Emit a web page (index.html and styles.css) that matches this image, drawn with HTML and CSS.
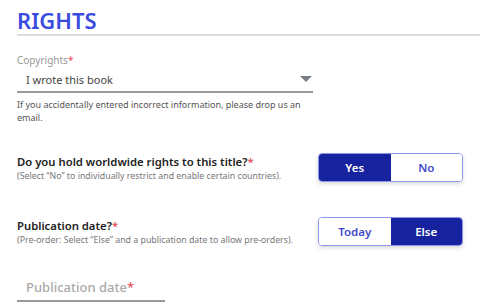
FILE: index.html
```html
<!DOCTYPE html>
<html>
<head>
  <title>Rights</title>
  <link rel="stylesheet" href="styles.css">
</head>
<body>

  <h1 class="title">RIGHTS</h1>

  <form class="form">

    <section class="field">
      <label class="field-label">Copyrights<span class="req">*</span></label>
      <div class="select">
        <span class="select-value">I wrote this book</span>
        <span class="caret"></span>
      </div>
      <p class="hint">If you accidentally entered incorrect information, please drop us an email.</p>
    </section>

    <section class="question">
      <div class="question-text">
        <h2>Do you hold worldwide rights to this title?<span class="req">*</span></h2>
        <p>(Select “No” to individually restrict and enable certain countries).</p>
      </div>
      <div class="toggle">
        <button type="button" class="on">Yes</button>
        <button type="button">No</button>
      </div>
    </section>

    <section class="question">
      <div class="question-text">
        <h2>Publication date?<span class="req">*</span></h2>
        <p>(Pre-order: Select “Else” and a publication date to allow pre-orders).</p>
      </div>
      <div class="toggle">
        <button type="button">Today</button>
        <button type="button" class="on">Else</button>
      </div>
    </section>

    <section class="date">
      <span class="placeholder">Publication date<span class="req">*</span></span>
    </section>

  </form>

</body>
</html>
```

FILE: styles.css
```css
body{
    margin: 0;
    padding: 0 0 0 17px;
    font-family: "Noto Sans", "Open Sans", sans-serif;
    background: #fff;
}

.title{
    margin: 0;
    padding-top: 7px;
    height: 27px;
    font-size: 22px;
    line-height: 27px;
    font-weight: 600;
    color: #3a4be0;
    border-bottom: 2px solid #dcdcdc;
}

.form{
    width: 446px;
    padding-top: 18px;
}

.req{
    color: #e8505b;
}

.field-label{
    display: block;
    font-size: 10px;
    line-height: 13px;
    color: #999;
}

.select{
    width: 296px;
    height: 24px;
    display: flex;
    align-items: center;
    justify-content: space-between;
    border-bottom: 2px solid #9a9a9a;
}

.select-value{
    padding-left: 9px;
    font-size: 11px;
    color: #444;
}

.caret{
    width: 0;
    height: 0;
    margin-right: 1px;
    border-left: 6px solid transparent;
    border-right: 6px solid transparent;
    border-top: 6px solid #7a7f86;
}

.hint{
    margin: 5px 0 0;
    font-size: 9px;
    line-height: 13px;
    color: #555;
    width: 300px;
}

.question{
    display: flex;
    align-items: center;
    justify-content: space-between;
    margin-top: 29px;
}

.question + .question{
    margin-top: 35px;
}

.question h2{
    margin: 0;
    font-size: 11.3px;
    line-height: 15px;
    font-weight: 600;
    color: #222;
}

.question p{
    margin: 1px 0 0;
    font-size: 8.8px;
    line-height: 12px;
    color: #777;
}

.toggle{
    display: flex;
    width: 145px;
    height: 29px;
    border: 1px solid #8d95ec;
    border-radius: 4px;
    box-shadow: 0 2px 4px rgba(0, 0, 0, 0.15);
    overflow: hidden;
    box-sizing: border-box;
}

.toggle button{
    flex: 1;
    font: inherit;
    font-size: 11.5px;
    font-weight: 600;
    border: none;
    background: #fff;
    color: #3f4bcc;
    padding: 0;
    cursor: pointer;
}

.toggle button.on{
    background: #17229f;
    color: #fff;
}

.date{
    margin-top: 30px;
    width: 148px;
    height: 24px;
    border-bottom: 2px solid #9a9a9a;
}

.placeholder{
    display: block;
    padding-left: 9px;
    font-size: 13px;
    line-height: 22px;
    color: #aaa;
    font-weight: 500;
}
```
